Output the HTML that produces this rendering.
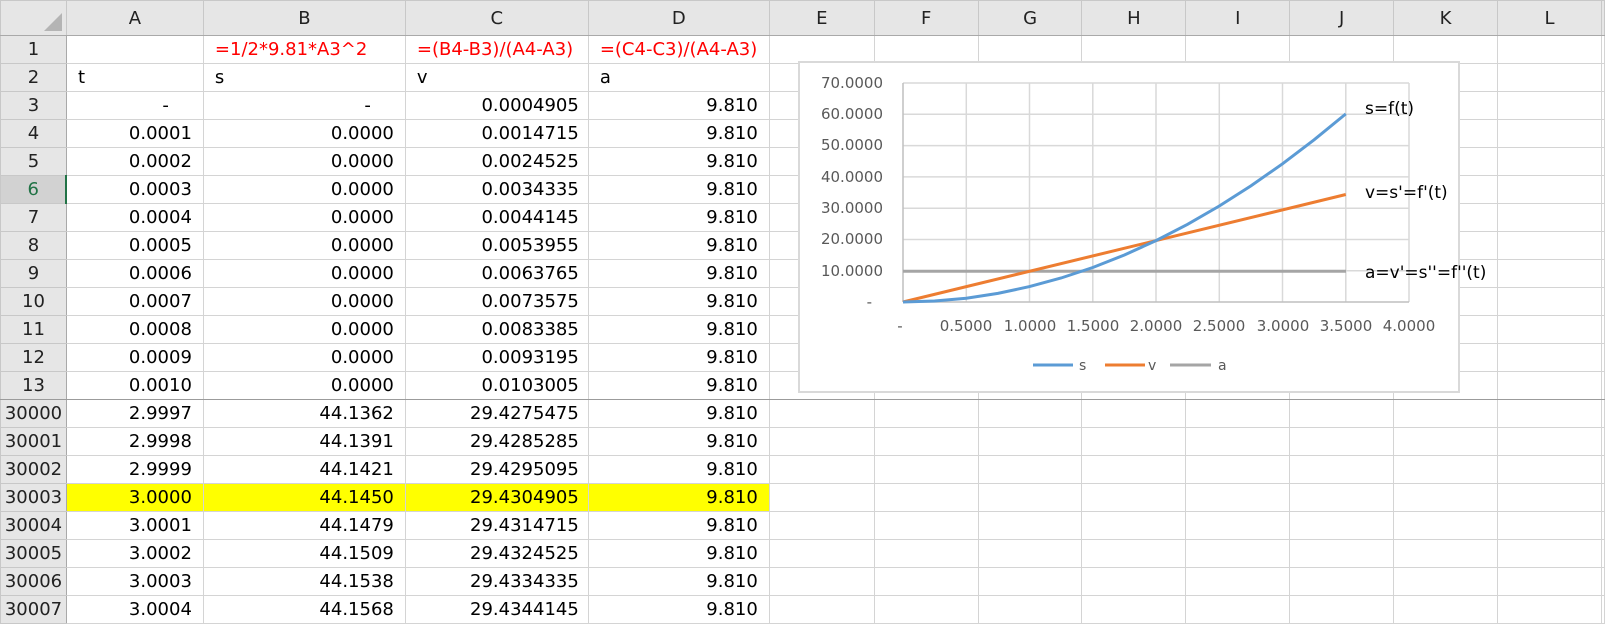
<!DOCTYPE html>
<html><head><meta charset="utf-8"><style>
body{margin:0;width:1605px;height:627px;overflow:hidden;background:#fff;font-family:"DejaVu Sans",sans-serif;}
table{border-collapse:collapse;table-layout:fixed;position:absolute;left:0;top:0;}
td{border:1px solid #d4d4d4;height:27px;padding:0;font-size:18px;color:#000;white-space:nowrap;overflow:visible;line-height:27px;}
td.r{text-align:right;padding-right:11px;}
td.c9{text-align:right;padding-right:9px;}
td.l{padding-left:11px;}
td.red{color:#ff0000;padding-left:11px;}
td.h{background:#e6e6e6;text-align:center;border-color:#c8c8c8;color:#222;}
td.rh{background:#e6e6e6;text-align:center;border-color:#c8c8c8;color:#222;border-right:1px solid #a9a9a9;}
tr.top td{height:34px;border-bottom:1px solid #a9a9a9;}
tr.sep td{border-bottom:1px solid #9b9b9b;}
tr.y td.d{background:#ffff00;}
.dash{padding-right:34px !important;}
</style></head><body>
<table>
<colgroup><col style="width:66px"><col style="width:137px"><col style="width:202px"><col style="width:183px"><col style="width:181px"><col style="width:105px"><col style="width:104px"><col style="width:104px"><col style="width:104px"><col style="width:104px"><col style="width:104px"><col style="width:104px"><col style="width:104px"><col style="width:3px"></colgroup>
<tr class="top"><td class="h" style="position:relative;"><div style="position:absolute;right:4px;bottom:4px;width:0;height:0;border-left:18px solid transparent;border-bottom:18px solid #b4b4b4;"></div></td><td class="h">A</td><td class="h">B</td><td class="h">C</td><td class="h">D</td><td class="h">E</td><td class="h">F</td><td class="h">G</td><td class="h">H</td><td class="h">I</td><td class="h">J</td><td class="h">K</td><td class="h">L</td><td class="h"></td></tr>
<tr><td class="rh">1</td><td></td><td class="red">=1/2*9.81*A3^2</td><td class="red">=(B4-B3)/(A4-A3)</td><td class="red">=(C4-C3)/(A4-A3)</td><td></td><td></td><td></td><td></td><td></td><td></td><td></td><td></td><td></td></tr>
<tr><td class="rh">2</td><td class="l">t</td><td class="l">s</td><td class="l">v</td><td class="l">a</td><td></td><td></td><td></td><td></td><td></td><td></td><td></td><td></td><td></td></tr>
<tr><td class="rh">3</td><td class="r dash">-</td><td class="r dash">-</td><td class="c9">0.0004905</td><td class="r">9.810</td><td></td><td></td><td></td><td></td><td></td><td></td><td></td><td></td><td></td></tr>
<tr><td class="rh">4</td><td class="r">0.0001</td><td class="r">0.0000</td><td class="c9">0.0014715</td><td class="r">9.810</td><td></td><td></td><td></td><td></td><td></td><td></td><td></td><td></td><td></td></tr>
<tr><td class="rh">5</td><td class="r">0.0002</td><td class="r">0.0000</td><td class="c9">0.0024525</td><td class="r">9.810</td><td></td><td></td><td></td><td></td><td></td><td></td><td></td><td></td><td></td></tr>
<tr><td class="rh" style="background:#d2d2d2;color:#217346;border-right:2px solid #217346;">6</td><td class="r">0.0003</td><td class="r">0.0000</td><td class="c9">0.0034335</td><td class="r">9.810</td><td></td><td></td><td></td><td></td><td></td><td></td><td></td><td></td><td></td></tr>
<tr><td class="rh">7</td><td class="r">0.0004</td><td class="r">0.0000</td><td class="c9">0.0044145</td><td class="r">9.810</td><td></td><td></td><td></td><td></td><td></td><td></td><td></td><td></td><td></td></tr>
<tr><td class="rh">8</td><td class="r">0.0005</td><td class="r">0.0000</td><td class="c9">0.0053955</td><td class="r">9.810</td><td></td><td></td><td></td><td></td><td></td><td></td><td></td><td></td><td></td></tr>
<tr><td class="rh">9</td><td class="r">0.0006</td><td class="r">0.0000</td><td class="c9">0.0063765</td><td class="r">9.810</td><td></td><td></td><td></td><td></td><td></td><td></td><td></td><td></td><td></td></tr>
<tr><td class="rh">10</td><td class="r">0.0007</td><td class="r">0.0000</td><td class="c9">0.0073575</td><td class="r">9.810</td><td></td><td></td><td></td><td></td><td></td><td></td><td></td><td></td><td></td></tr>
<tr><td class="rh">11</td><td class="r">0.0008</td><td class="r">0.0000</td><td class="c9">0.0083385</td><td class="r">9.810</td><td></td><td></td><td></td><td></td><td></td><td></td><td></td><td></td><td></td></tr>
<tr><td class="rh">12</td><td class="r">0.0009</td><td class="r">0.0000</td><td class="c9">0.0093195</td><td class="r">9.810</td><td></td><td></td><td></td><td></td><td></td><td></td><td></td><td></td><td></td></tr>
<tr class="sep"><td class="rh">13</td><td class="r">0.0010</td><td class="r">0.0000</td><td class="c9">0.0103005</td><td class="r">9.810</td><td></td><td></td><td></td><td></td><td></td><td></td><td></td><td></td><td></td></tr>
<tr><td class="rh">30000</td><td class="r">2.9997</td><td class="r">44.1362</td><td class="c9">29.4275475</td><td class="r">9.810</td><td></td><td></td><td></td><td></td><td></td><td></td><td></td><td></td><td></td></tr>
<tr><td class="rh">30001</td><td class="r">2.9998</td><td class="r">44.1391</td><td class="c9">29.4285285</td><td class="r">9.810</td><td></td><td></td><td></td><td></td><td></td><td></td><td></td><td></td><td></td></tr>
<tr><td class="rh">30002</td><td class="r">2.9999</td><td class="r">44.1421</td><td class="c9">29.4295095</td><td class="r">9.810</td><td></td><td></td><td></td><td></td><td></td><td></td><td></td><td></td><td></td></tr>
<tr class="y"><td class="rh">30003</td><td class="r d">3.0000</td><td class="r d">44.1450</td><td class="c9 d">29.4304905</td><td class="r d">9.810</td><td></td><td></td><td></td><td></td><td></td><td></td><td></td><td></td><td></td></tr>
<tr><td class="rh">30004</td><td class="r">3.0001</td><td class="r">44.1479</td><td class="c9">29.4314715</td><td class="r">9.810</td><td></td><td></td><td></td><td></td><td></td><td></td><td></td><td></td><td></td></tr>
<tr><td class="rh">30005</td><td class="r">3.0002</td><td class="r">44.1509</td><td class="c9">29.4324525</td><td class="r">9.810</td><td></td><td></td><td></td><td></td><td></td><td></td><td></td><td></td><td></td></tr>
<tr><td class="rh">30006</td><td class="r">3.0003</td><td class="r">44.1538</td><td class="c9">29.4334335</td><td class="r">9.810</td><td></td><td></td><td></td><td></td><td></td><td></td><td></td><td></td><td></td></tr>
<tr><td class="rh">30007</td><td class="r">3.0004</td><td class="r">44.1568</td><td class="c9">29.4344145</td><td class="r">9.810</td><td></td><td></td><td></td><td></td><td></td><td></td><td></td><td></td><td></td></tr>
</table>
<svg width="1605" height="627" style="position:absolute;left:0;top:0" font-family="DejaVu Sans, sans-serif">
<rect x="799" y="62" width="660" height="330" fill="#fff" stroke="#d9d9d9" stroke-width="2"/>
<g stroke="#d9d9d9" stroke-width="1.5">
<line x1="903" y1="83" x2="1409" y2="83"/><line x1="903" y1="114.3" x2="1409" y2="114.3"/><line x1="903" y1="145.6" x2="1409" y2="145.6"/><line x1="903" y1="176.9" x2="1409" y2="176.9"/><line x1="903" y1="208.2" x2="1409" y2="208.2"/><line x1="903" y1="239.5" x2="1409" y2="239.5"/><line x1="903" y1="270.8" x2="1409" y2="270.8"/>
<line x1="966.3" y1="83" x2="966.3" y2="302"/><line x1="1029.5" y1="83" x2="1029.5" y2="302"/><line x1="1092.8" y1="83" x2="1092.8" y2="302"/><line x1="1156" y1="83" x2="1156" y2="302"/><line x1="1219.3" y1="83" x2="1219.3" y2="302"/><line x1="1282.5" y1="83" x2="1282.5" y2="302"/><line x1="1345.8" y1="83" x2="1345.8" y2="302"/><line x1="1409" y1="83" x2="1409" y2="302"/>
</g>
<g stroke="#bfbfbf" stroke-width="1.5"><line x1="903" y1="83" x2="903" y2="302"/><line x1="903" y1="302" x2="1409" y2="302"/></g>
<g font-size="15" fill="#595959" text-anchor="end">
<text x="883" y="88">70.0000</text><text x="883" y="119">60.0000</text><text x="883" y="150">50.0000</text><text x="883" y="182">40.0000</text><text x="883" y="213">30.0000</text><text x="883" y="244">20.0000</text><text x="883" y="276">10.0000</text><text x="872" y="307">-</text>
</g>
<g font-size="15" fill="#595959" text-anchor="middle">
<text x="900" y="331">-</text><text x="966" y="331">0.5000</text><text x="1030" y="331">1.0000</text><text x="1093" y="331">1.5000</text><text x="1156" y="331">2.0000</text><text x="1219" y="331">2.5000</text><text x="1283" y="331">3.0000</text><text x="1346" y="331">3.5000</text><text x="1409" y="331">4.0000</text>
</g>
<line x1="903" y1="271.3" x2="1346" y2="271.3" stroke="#a5a5a5" stroke-width="3"/>
<line x1="903" y1="302" x2="1345.8" y2="194.5" stroke="#ed7d31" stroke-width="3"/>
<polyline fill="none" stroke="#5b9bd5" stroke-width="3" points="903,302 934.6,301 966.3,298.2 997.9,293.4 1029.5,286.6 1061.1,278 1092.8,267.5 1124.4,255 1156,240.6 1187.6,224.3 1219.3,206 1250.9,185.9 1282.5,163.8 1314.1,139.8 1345.8,113.9"/>
<g font-size="17" fill="#000"><text x="1365" y="114">s=f(t)</text><text x="1365" y="198">v=s'=f'(t)</text><text x="1365" y="278">a=v'=s''=f''(t)</text></g>
<g stroke-width="3"><line x1="1033" y1="365" x2="1073" y2="365" stroke="#5b9bd5"/><line x1="1105" y1="365" x2="1145" y2="365" stroke="#ed7d31"/><line x1="1170" y1="365" x2="1211" y2="365" stroke="#a5a5a5"/></g>
<g font-size="14" fill="#595959"><text x="1079" y="370">s</text><text x="1148" y="370">v</text><text x="1218" y="370">a</text></g>
</svg>
</body></html>
